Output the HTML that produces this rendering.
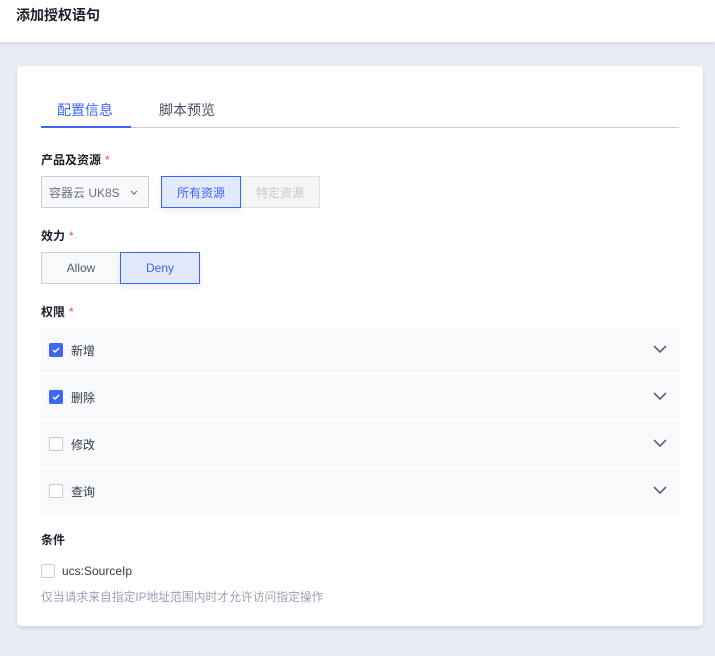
<!DOCTYPE html>
<html><head><meta charset="utf-8"><style>
*{box-sizing:border-box;margin:0;padding:0}
body{width:715px;height:656px;background:#e9ecf4;font-family:"Liberation Sans","Noto Sans CJK SC",sans-serif;position:relative;overflow:hidden;color:#1f2533}
.hdr{position:absolute;left:0;top:0;width:715px;height:42px;background:#fff;box-shadow:0 2px 4px rgba(0,0,0,.08)}
.hdr span{position:absolute;left:16px;top:5px;font-size:14px;font-weight:bold;color:#1a1f2b}
.card{position:absolute;left:17px;top:66px;width:686px;height:560px;background:#fff;border-radius:4px;box-shadow:0 2px 4px rgba(0,0,0,.12)}
.a{position:absolute}
.lbl{font-size:12px;font-weight:bold;color:#1a1f2b}
.lbl i{color:#f5533d;font-style:normal;margin-left:4px;font-weight:normal}
.btn{position:absolute;height:32px;display:flex;align-items:center;justify-content:center;font-size:12px}
.row{position:absolute;left:24px;width:638px;height:44px;background:#f8f9fb}
.cb{position:absolute;left:8px;top:15px;width:14px;height:14px;border-radius:2px;border:1px solid #c7ccd8;background:#fff}
.cb.on{background:#3d67f0;border-color:#3d67f0}
.row span{position:absolute;left:30px;top:14px;font-size:12px;color:#333a48}
.row svg{position:absolute;right:12px;top:17px}
</style></head><body>
<div class="hdr"><span>添加授权语句</span></div>
<div class="card">
 <div class="a" style="left:40px;top:34px;font-size:14px;color:#3d67f0">配置信息</div>
 <div class="a" style="left:142px;top:34px;font-size:14px;color:#4a5060">脚本预览</div>
 <div class="a" style="left:24px;top:61px;width:638px;height:1px;background:#c9ceda"></div>
 <div class="a" style="left:24px;top:60px;width:90px;height:2px;background:#3d67f0"></div>
 <div class="a lbl" style="left:24px;top:85px">产品及资源<i>*</i></div>
 <div class="btn" style="left:24px;top:110px;width:108px;border:1px solid #c9ceda;background:#f8f9fb;color:#6a7080;justify-content:flex-start;padding-left:7px;font-size:12px">容器云 UK8S<svg width="8" height="5" viewBox="0 0 8 5" style="margin-left:10px"><path d="M1 1l3 3 3-3" stroke="#6a7080" stroke-width="1.2" fill="none"/></svg></div>
 <div class="btn" style="left:144px;top:110px;width:80px;border:1px solid #3d67f0;background:#e3e9fd;color:#3d67f0;box-shadow:0 3px 6px rgba(0,0,0,.08);z-index:2">所有资源</div>
 <div class="btn" style="left:223px;top:110px;width:80px;border:1px solid #dcdfe5;background:#f5f5f5;color:#c8c8c8">特定资源</div>
 <div class="a lbl" style="left:24px;top:161px">效力<i>*</i></div>
 <div class="btn" style="left:24px;top:186px;width:80px;border:1px solid #c9ceda;background:#f8f9fb;color:#555c6b">Allow</div>
 <div class="btn" style="left:103px;top:186px;width:80px;border:1px solid #3d67f0;background:#e3e9fd;color:#3d67f0;box-shadow:0 3px 6px rgba(0,0,0,.08)">Deny</div>
 <div class="a lbl" style="left:24px;top:237px">权限<i>*</i></div>
 <div class="row" style="top:262px"><div class="cb on"><svg width="12" height="12" viewBox="0 0 12 12" style="position:absolute;left:0;top:0"><path d="M3 6l2 2 4-4" stroke="#fff" stroke-width="1.4" fill="none"/></svg></div><span>新增</span><svg width="14" height="8" viewBox="0 0 14 8"><path d="M1 1l6 6 6-6" stroke="#5a6274" stroke-width="1.6" fill="none"/></svg></div>
 <div class="row" style="top:309px"><div class="cb on"><svg width="12" height="12" viewBox="0 0 12 12" style="position:absolute;left:0;top:0"><path d="M3 6l2 2 4-4" stroke="#fff" stroke-width="1.4" fill="none"/></svg></div><span>删除</span><svg width="14" height="8" viewBox="0 0 14 8"><path d="M1 1l6 6 6-6" stroke="#5a6274" stroke-width="1.6" fill="none"/></svg></div>
 <div class="row" style="top:356px"><div class="cb"></div><span>修改</span><svg width="14" height="8" viewBox="0 0 14 8"><path d="M1 1l6 6 6-6" stroke="#5a6274" stroke-width="1.6" fill="none"/></svg></div>
 <div class="row" style="top:403px"><div class="cb"></div><span>查询</span><svg width="14" height="8" viewBox="0 0 14 8"><path d="M1 1l6 6 6-6" stroke="#5a6274" stroke-width="1.6" fill="none"/></svg></div>
 <div class="a lbl" style="left:24px;top:465px">条件</div>
 <div class="a" style="left:24px;top:498px;width:14px;height:14px;border:1px solid #c7ccd8;border-radius:2px"></div>
 <div class="a" style="left:45px;top:498px;font-size:12px;color:#333a48">ucs:SourceIp</div>
 <div class="a" style="left:24px;top:522px;font-size:11.8px;color:#9aa1b2">仅当请求来自指定IP地址范围内时才允许访问指定操作</div>
</div>
</body></html>
